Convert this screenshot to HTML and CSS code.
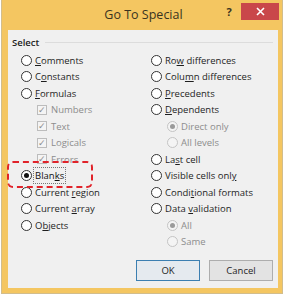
FILE: index.html
```html
<!doctype html>
<html lang="en">
<head>
    <meta charset="utf-8">
    <title>Go To Special</title>
    <link rel="stylesheet" href="styles.css">
</head>
<body>
<div class="window">
    <div class="titlebar">
        <span class="title">Go To Special</span>
        <span class="help">?</span>
        <span class="close">
            <svg width="9" height="9" viewBox="0 0 9 9"><path d="M1 1L8 8M8 1L1 8" stroke="#fff" stroke-width="1.6"/></svg>
        </span>
    </div>
    <div class="frame">
        <div class="content">
            <div class="group-label"><span>Select</span><span class="rule"></span></div>
            <div class="columns">
                <div class="col col-left">
                    <div class="row"><span class="radio"></span><span class="label"><u>C</u>omments</span></div>
                    <div class="row"><span class="radio"></span><span class="label">C<u>o</u>nstants</span></div>
                    <div class="row"><span class="radio"></span><span class="label"><u>F</u>ormulas</span></div>
                    <div class="row sub disabled"><span class="check">&#10003;</span><span class="label">Numbers</span></div>
                    <div class="row sub disabled"><span class="check">&#10003;</span><span class="label">Text</span></div>
                    <div class="row sub disabled"><span class="check">&#10003;</span><span class="label">Logicals</span></div>
                    <div class="row sub disabled"><span class="check">&#10003;</span><span class="label">Errors</span></div>
                    <div class="row"><span class="radio on"></span><span class="label focus">Blan<u>k</u>s</span></div>
                    <div class="row"><span class="radio"></span><span class="label">Current <u>r</u>egion</span></div>
                    <div class="row"><span class="radio"></span><span class="label">Current <u>a</u>rray</span></div>
                    <div class="row"><span class="radio"></span><span class="label">O<u>b</u>jects</span></div>
                </div>
                <div class="col col-right">
                    <div class="row"><span class="radio"></span><span class="label">Ro<u>w</u> differences</span></div>
                    <div class="row"><span class="radio"></span><span class="label">Colu<u>m</u>n differences</span></div>
                    <div class="row"><span class="radio"></span><span class="label"><u>P</u>recedents</span></div>
                    <div class="row"><span class="radio"></span><span class="label"><u>D</u>ependents</span></div>
                    <div class="row sub disabled"><span class="radio on"></span><span class="label">Direct only</span></div>
                    <div class="row sub disabled"><span class="radio"></span><span class="label">All levels</span></div>
                    <div class="row"><span class="radio"></span><span class="label">La<u>s</u>t cell</span></div>
                    <div class="row"><span class="radio"></span><span class="label">Visible cells onl<u>y</u></span></div>
                    <div class="row"><span class="radio"></span><span class="label">Condi<u>t</u>ional formats</span></div>
                    <div class="row"><span class="radio"></span><span class="label">Data <u>v</u>alidation</span></div>
                    <div class="row sub disabled"><span class="radio on"></span><span class="label">All</span></div>
                    <div class="row sub disabled"><span class="radio"></span><span class="label">Same</span></div>
                </div>
            </div>
            <div class="buttons">
                <button class="btn default">OK</button>
                <button class="btn">Cancel</button>
            </div>
            <div class="highlight"></div>
        </div>
    </div>
</div>
</body>
</html>
```

FILE: styles.css
```css
body {
    margin: 0;
    background: #fff;
    font-family: "Open Sans", sans-serif;
}
.window {
    width: 280px;
    margin-left: 1px;
    background: #f4c661;
    border: 1px solid #d2bd8c;
    border-top: none;
}
.titlebar {
    display: flex;
    align-items: flex-start;
    height: 30px;
}
.title {
    flex: 1;
    padding-left: 68px;
    line-height: 30px;
    text-align: center;
    font-size: 12.5px;
    color: #3a3320;
}
.help {
    width: 24px;
    line-height: 24px;
    text-align: center;
    font-size: 11px;
    font-weight: bold;
    color: #3a3320;
}
.close {
    display: flex;
    align-items: center;
    justify-content: center;
    width: 38px;
    height: 17px;
    margin: 3px 3px 0 0;
    background: #c9474a;
}
.frame { padding: 0 4px 5px 6px; }
.content {
    position: relative;
    background: #f0f0f0;
    padding: 5px 0 7px;
    font-size: 9.5px;
    color: #1e1e1e;
}
.group-label {
    display: flex;
    align-items: center;
    height: 14px;
    padding: 0 5px 0 4px;
    font-size: 9.5px;
    font-weight: 600;
    color: #222;
}
.group-label .rule {
    flex: 1;
    height: 1px;
    margin-left: 6px;
    background: #dcdcdc;
}
.columns {
    display: flex;
    padding-top: 3px;
}
.col-left { width: 130px; padding-left: 13px; }
.col-right { flex: 1; }
.row {
    display: flex;
    align-items: center;
    height: 16.5px;
    white-space: nowrap;
}
.row.sub { padding-left: 16px; }
.radio {
    position: relative;
    width: 11px;
    height: 11px;
    box-sizing: border-box;
    border: 1px solid #333;
    border-radius: 50%;
    background: #fff;
    margin-right: 3px;
}
.radio.on::after {
    content: "";
    position: absolute;
    left: 2px;
    top: 2px;
    width: 5px;
    height: 5px;
    border-radius: 50%;
    background: #111;
}
.check {
    width: 10px;
    height: 10px;
    box-sizing: border-box;
    border: 1px solid #bcbcbc;
    background: #f4f4f4;
    margin-right: 4px;
    font-size: 9px;
    line-height: 8px;
    text-align: center;
    color: #8c8c8c;
}
.disabled .label { color: #8d8d8d; }
.disabled .radio { border-color: #c4c4c4; background: #f4f4f4; }
.disabled .radio.on::after { background: #9a9a9a; }
.label u { text-decoration-thickness: 1px; text-underline-offset: 1px; }
.label.focus {
    outline: 1px dotted #777;
    outline-offset: 1px;
    color: #111;
}
.buttons {
    display: flex;
    justify-content: flex-end;
    gap: 9px;
    padding-right: 5px;
    margin-top: 10px;
}
.btn {
    width: 64px;
    height: 21px;
    border: 1px solid #adadad;
    background: #e3e3e3;
    font-family: "Open Sans", sans-serif;
    font-size: 9.5px;
    color: #1e1e1e;
    padding: 0;
}
.btn.default { border-color: #3c7fb1; background: #e5eaef; }
.highlight {
    position: absolute;
    left: -1px;
    top: 131px;
    width: 86px;
    height: 27px;
    box-sizing: border-box;
    border: 2px dashed #e0232a;
    border-radius: 6px;
}
```
